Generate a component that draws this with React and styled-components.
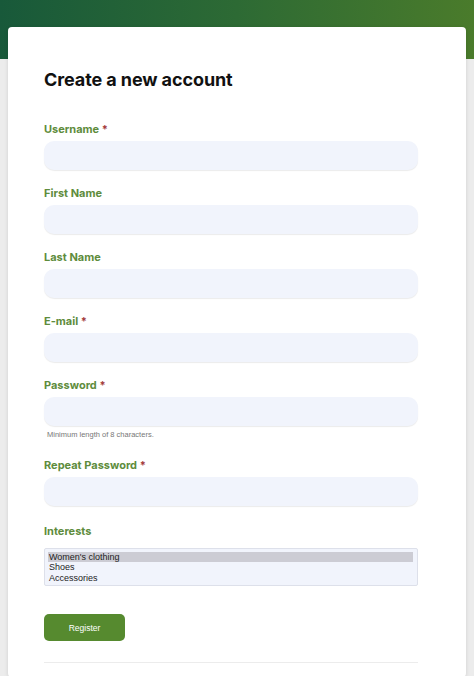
import React from "react";
import styled, { createGlobalStyle } from "styled-components";

const GlobalStyle = createGlobalStyle`
  html, body {
    margin: 0;
    padding: 0;
    background: #ececec;
  }
  body {
    font-family: Inter, "Noto Sans", sans-serif;
  }
`;

const Header = styled.div`
  height: 59px;
  background: linear-gradient(90deg, #18593a 0%, #2d6a34 50%, #4a7b2b 100%);
`;

const Card = styled.div`
  position: relative;
  margin: -32px 8px 0 8px;
  background: #fff;
  border-radius: 4px;
  box-shadow: 0 1px 4px rgba(0, 0, 0, 0.12);
  padding: 41px 48px 14px 36px;
  min-height: 620px;
  box-sizing: border-box;
`;

const Title = styled.h1`
  margin: 0 0 30px;
  font-size: 18px;
  line-height: 24px;
  font-weight: 700;
  color: #111;
  letter-spacing: -0.1px;
`;

const Field = styled.div`
  display: flex;
  flex-direction: column;
  margin-bottom: ${(p) => p.$mb ?? 16}px;
`;

const Label = styled.label`
  font-size: 11px;
  line-height: 15px;
  font-weight: 700;
  color: #5e8c3c;
  margin-bottom: ${(p) => p.$gap ?? 4}px;
`;

const Star = styled.span`
  color: #a33a3a;
`;

const Input = styled.input`
  height: 29px;
  box-sizing: border-box;
  border: none;
  border-radius: 10px;
  background: #f1f4fc;
  box-shadow: 0 1px 1px rgba(0, 0, 0, 0.08);
  outline: none;
  padding: 0 10px;
`;

const Hint = styled.div`
  margin-top: 4px;
  font-family: "Liberation Sans", Arial, sans-serif;
  font-size: 7.5px;
  line-height: 10px;
  color: #777;
  padding-left: 3px;
`;

const Select = styled.div`
  height: 38px;
  box-sizing: border-box;
  border: 1px solid #dde0ea;
  border-radius: 2px;
  background: #f1f4fc;
  padding: 3px 4px 3px 3px;
  font-family: "Liberation Sans", Arial, sans-serif;
  font-size: 9px;
  color: #222;
`;

const Option = styled.div`
  line-height: 10.3px;
  padding-left: 1px;
  background: ${(p) => (p.$selected ? "#ccccd4" : "transparent")};
`;

const Button = styled.button`
  width: 81px;
  height: 27px;
  border: none;
  border-radius: 5px;
  background: #568a2f;
  color: #fff;
  font-family: "Liberation Sans", Arial, sans-serif;
  font-size: 8.5px;
  margin-top: 28px;
`;

const Divider = styled.hr`
  border: none;
  border-top: 1px solid #ececec;
  margin: 21px 0 0;
`;

const fields = [
  { label: "Username", required: true },
  { label: "First Name" },
  { label: "Last Name" },
  { label: "E-mail", required: true },
];

export default function App() {
  return (
    <>
      <GlobalStyle />
      <Header />
      <Card>
        <Title>Create a new account</Title>
        {fields.map((f) => (
          <Field key={f.label}>
            <Label>
              {f.label}
              {f.required && <Star> *</Star>}
            </Label>
            <Input />
          </Field>
        ))}
        <Field $mb={18}>
          <Label>
            Password<Star> *</Star>
          </Label>
          <Input type="password" />
          <Hint>Minimum length of 8 characters.</Hint>
        </Field>
        <Field $mb={18}>
          <Label>
            Repeat Password<Star> *</Star>
          </Label>
          <Input type="password" />
        </Field>
        <Field $mb={0}>
          <Label $gap={9}>Interests</Label>
          <Select>
            <Option $selected>Women's clothing</Option>
            <Option>Shoes</Option>
            <Option>Accessories</Option>
          </Select>
        </Field>
        <Button>Register</Button>
        <Divider />
      </Card>
    </>
  );
}
